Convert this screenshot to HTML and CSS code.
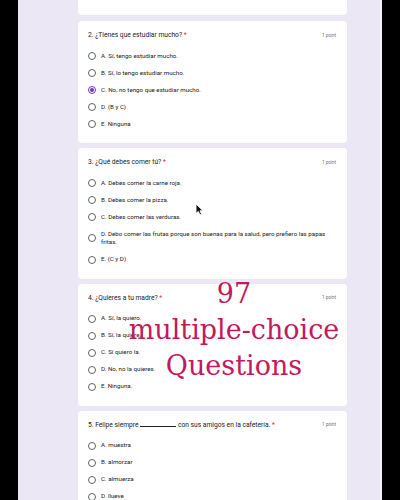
FILE: index.html
```html
<!DOCTYPE html>
<html lang="es">
<head>
    <meta charset="UTF-8">
    <meta name="viewport" content="width=device-width, initial-scale=1.0">
    <title>Cuestionario</title>
    <link rel="stylesheet" href="styles.css">
</head>
<body>
    <div class="frame">
        <div class="form">
            <div class="card card-cut">
                <div class="options">
                    <div class="option"><span class="radio"></span></div>
                </div>
            </div>

            <div class="card">
                <div class="question">
                    <span class="title">2. ¿Tienes que estudiar mucho? <span class="req">*</span></span>
                    <span class="points">1 point</span>
                </div>
                <div class="options">
                    <div class="option"><span class="radio"></span><span class="label">A. Sí, tengo estudiar mucho.</span></div>
                    <div class="option"><span class="radio"></span><span class="label">B. Sí, lo tengo estudiar mucho.</span></div>
                    <div class="option"><span class="radio checked"></span><span class="label">C. No, no tengo que estudiar mucho.</span></div>
                    <div class="option"><span class="radio"></span><span class="label">D. (B y C)</span></div>
                    <div class="option"><span class="radio"></span><span class="label">E. Ninguna</span></div>
                </div>
            </div>

            <div class="card">
                <div class="question">
                    <span class="title">3. ¿Qué debes comer tú? <span class="req">*</span></span>
                    <span class="points">1 point</span>
                </div>
                <div class="options">
                    <div class="option"><span class="radio"></span><span class="label">A. Debes comer la carne roja.</span></div>
                    <div class="option"><span class="radio"></span><span class="label">B. Debes comer la pizza.</span></div>
                    <div class="option"><span class="radio"></span><span class="label">C. Debes comer las verduras.</span></div>
                    <div class="option"><span class="radio"></span><span class="label">D. Debo comer las frutas porque son buenas para la salud, pero prefiero las papas fritas.</span></div>
                    <div class="option"><span class="radio"></span><span class="label">E. (C y D)</span></div>
                </div>
            </div>

            <div class="card">
                <div class="question">
                    <span class="title">4. ¿Quieres a tu madre? <span class="req">*</span></span>
                    <span class="points">1 point</span>
                </div>
                <div class="options">
                    <div class="option"><span class="radio"></span><span class="label">A. Sí, la quiero.</span></div>
                    <div class="option"><span class="radio"></span><span class="label">B. Sí, la quiere.</span></div>
                    <div class="option"><span class="radio"></span><span class="label">C. Sí quiero la.</span></div>
                    <div class="option"><span class="radio"></span><span class="label">D. No, no la quieres.</span></div>
                    <div class="option"><span class="radio"></span><span class="label">E. Ninguna.</span></div>
                </div>
            </div>

            <div class="card">
                <div class="question">
                    <span class="title">5. Felipe siempre <span class="blank"></span> con sus amigos en la cafetería. <span class="req">*</span></span>
                    <span class="points">1 point</span>
                </div>
                <div class="options">
                    <div class="option"><span class="radio"></span><span class="label">A. muestra</span></div>
                    <div class="option"><span class="radio"></span><span class="label">B. almorzar</span></div>
                    <div class="option"><span class="radio"></span><span class="label">C. almuerza</span></div>
                    <div class="option"><span class="radio"></span><span class="label">D. llueve</span></div>
                </div>
            </div>
        </div>

        <!-- overlay caption -->
        <div class="caption">97<br>multiple-choice<br>Questions</div>

        <svg class="cursor" width="9" height="13" viewBox="0 0 9 13">
            <path d="M1 1 L1 10.5 L3.3 8.4 L5 12 L6.6 11.3 L5 7.8 L8 7.8 Z" fill="#111" stroke="#fff" stroke-width="0.9"/>
        </svg>
    </div>
</body>
</html>
```

FILE: styles.css
```css
* {
    margin: 0;
    padding: 0;
    box-sizing: border-box;
}

body {
    background: #000;
    font-family: 'Roboto', 'Liberation Sans', sans-serif;
    color: #202124;
}

.frame {
    position: relative;
    width: 364px;
    height: 500px;
    margin-left: 18px;
    background: #ebe7f5;
    border-right: 2px solid #f7f5fb;
    overflow: hidden;
}

.form {
    width: 269px;
    margin-left: 60px;
    display: flex;
    flex-direction: column;
    gap: 5px;
}

.card {
    background: #fff;
    border-radius: 4px;
    padding: 9px 10px 10.5px 10px;
}

.card-cut {
    margin-top: -12.5px;
    padding-top: 0;
    margin-bottom: 1px;
}

.question {
    display: flex;
    justify-content: space-between;
    align-items: center;
    height: 10px;
    margin-bottom: 7.5px;
}

.title {
    font-size: 6.7px;
    line-height: 10px;
}

.req {
    color: #d93025;
}

.blank {
    display: inline-block;
    width: 36px;
    border-bottom: 0.7px solid #202124;
    vertical-align: baseline;
}

.points {
    font-size: 4.6px;
    color: #70757a;
    margin-right: 1px;
}

.option {
    display: flex;
    align-items: center;
    gap: 5px;
    min-height: 17px;
    padding: 4.25px 0;
}

.radio {
    flex: none;
    width: 8px;
    height: 8px;
    border: 1px solid #5f6368;
    border-radius: 50%;
    display: flex;
    align-items: center;
    justify-content: center;
}

.radio.checked {
    border-color: #673ab7;
}

.radio.checked::after {
    content: '';
    width: 4px;
    height: 4px;
    border-radius: 50%;
    background: #673ab7;
}

.label {
    font-size: 6.2px;
    line-height: 8.5px;
    padding-right: 4px;
}

.caption {
    position: absolute;
    left: 82px;
    top: 276px;
    width: 268px;
    text-align: center;
    font-family: 'DejaVu Serif', serif;
    font-size: 27px;
    line-height: 36px;
    color: #c4195c;
}

.cursor {
    position: absolute;
    left: 177px;
    top: 203px;
}
```
